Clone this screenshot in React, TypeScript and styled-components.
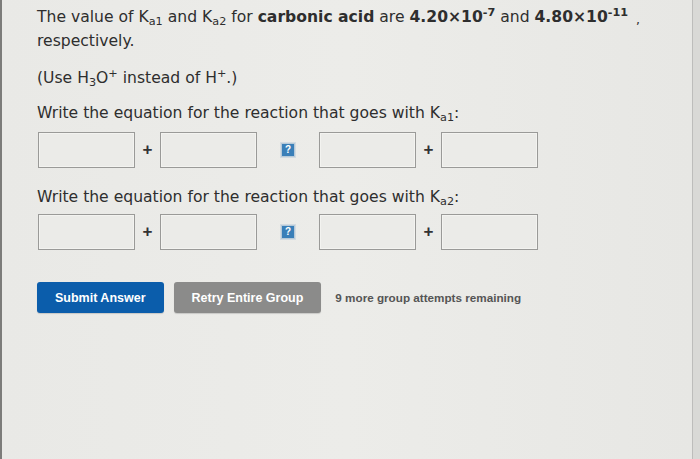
import React from "react";
import styled, { createGlobalStyle } from "styled-components";

const GlobalStyle = createGlobalStyle`
  html, body {
    margin: 0;
    padding: 0;
    background: #e6e6e3;
  }
`;

const Frame = styled.div`
  display: flex;
  width: 700px;
  height: 459px;
  overflow: hidden;
  background: #e6e6e3;
`;

const Page = styled.main`
  flex: 1;
  display: flex;
  flex-direction: column;
  padding: 5px 0 0 35px;
  border-left: 2px solid #7c7c7a;
  border-right: 1px solid #bdbdbb;
  background: linear-gradient(90deg, #e9e9e6 0%, #ecece9 50%, #e7e7e4 100%);
  font-family: "DejaVu Sans", Verdana, sans-serif;
  color: #2e2e2e;
  font-size: 15.6px;
`;

const Edge = styled.div`
  width: 7px;
  background: #d9d9d6;
`;

const Para = styled.p<{ $gap?: number }>`
  margin: ${(p) => p.$gap ?? 0}px 0 0;
  line-height: 24px;
`;

const Sub = styled.sub`
  font-size: 0.72em;
  vertical-align: -0.25em;
  line-height: 0;
`;

const Sup = styled.sup`
  font-size: 0.72em;
  vertical-align: 0.5em;
  line-height: 0;
`;

const Comma = styled.span`
  display: inline-block;
  margin-left: 8px;
  font-size: 0.8em;
  line-height: 0;
  vertical-align: -0.2em;
`;

const EquationRow = styled.div<{ $gap: number }>`
  display: flex;
  align-items: center;
  margin: ${(p) => p.$gap}px 0 0 1px;
  height: 37px;
`;

const Slot = styled.div`
  width: 95px;
  height: 34px;
  border: 1px solid #9a9a98;
  background: #ebebe8;
  box-shadow: inset 0 0 0 1px #f3f3f0;
`;

const Plus = styled.span`
  width: 25px;
  text-align: center;
  font-family: "Liberation Sans", Arial, sans-serif;
  font-weight: bold;
  font-size: 17px;
  color: #333;
`;

const Arrow = styled.div`
  width: 62px;
  display: flex;
  justify-content: center;
`;

const Help = styled.span`
  width: 12px;
  height: 12px;
  display: flex;
  align-items: center;
  justify-content: center;
  background: #3a7fb8;
  border: 1px solid #b6c9d8;
  outline: 1px solid #d3dbe1;
  color: #fff;
  font-family: "Liberation Sans", Arial, sans-serif;
  font-weight: bold;
  font-size: 10px;
`;

const Actions = styled.div`
  display: flex;
  align-items: center;
  margin-top: 32px;
  gap: 10px;
`;

const Button = styled.button<{ $tone: "primary" | "muted" }>`
  height: 31px;
  padding: 0 18px;
  border: none;
  border-radius: 3px;
  background: ${(p) => (p.$tone === "primary" ? "#0b5dab" : "#8b8b8a")};
  color: #fff;
  font-family: "Liberation Sans", Arial, sans-serif;
  font-weight: bold;
  font-size: 12.5px;
  box-shadow: 0 1px 1px rgba(0, 0, 0, 0.15);
`;

const Attempts = styled.span`
  margin-left: 4px;
  font-family: "Liberation Sans", Arial, sans-serif;
  font-weight: bold;
  font-size: 11.7px;
  color: #555;
`;

const Ka = ({ n }: { n: number }) => (
  <>
    K<Sub>a{n}</Sub>
  </>
);

const Equation = ({ gap }: { gap: number }) => (
  <EquationRow $gap={gap}>
    <Slot />
    <Plus>+</Plus>
    <Slot />
    <Arrow>
      <Help>?</Help>
    </Arrow>
    <Slot />
    <Plus>+</Plus>
    <Slot />
  </EquationRow>
);

export default function App() {
  return (
    <>
      <GlobalStyle />
      <Frame>
        <Page>
          <Para>
            The value of <Ka n={1} /> and <Ka n={2} /> for <b>carbonic acid</b> are{" "}
            <b>
              4.20×10<Sup>-7</Sup>
            </b>{" "}
            and{" "}
            <b>
              4.80×10<Sup>-11</Sup>
            </b>
            <Comma>,</Comma>
            <br />
            respectively.
          </Para>
          <Para $gap={13}>
            (Use H<Sub>3</Sub>O<Sup>+</Sup> instead of H<Sup>+</Sup>.)
          </Para>
          <Para $gap={11}>
            Write the equation for the reaction that goes with <Ka n={1} />:
          </Para>
          <Equation gap={6} />
          <Para $gap={17}>
            Write the equation for the reaction that goes with <Ka n={2} />:
          </Para>
          <Equation gap={4} />
          <Actions>
            <Button $tone="primary">Submit Answer</Button>
            <Button $tone="muted">Retry Entire Group</Button>
            <Attempts>9 more group attempts remaining</Attempts>
          </Actions>
        </Page>
        <Edge />
      </Frame>
    </>
  );
}
